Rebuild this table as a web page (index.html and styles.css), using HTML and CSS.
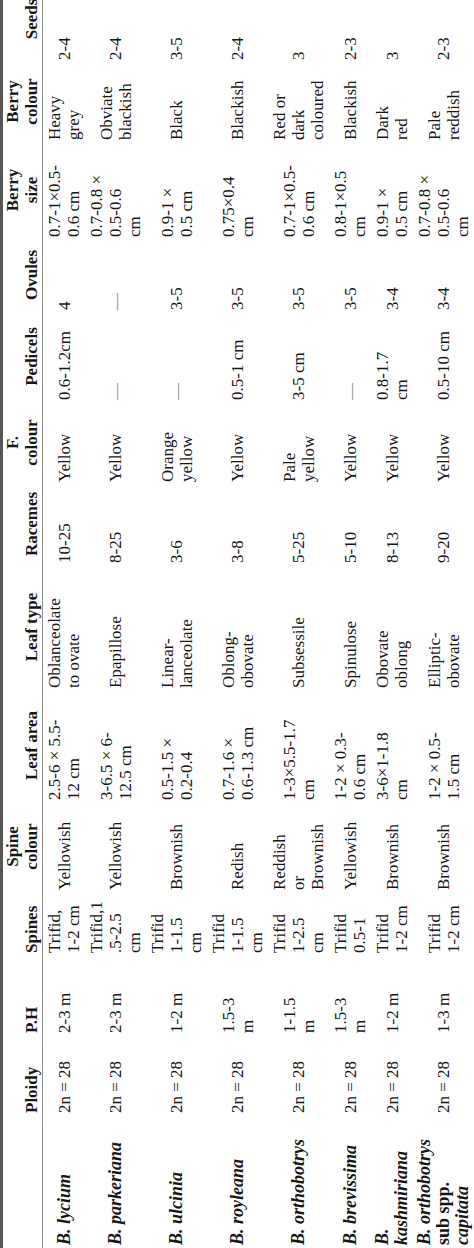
FILE: index.html
```html
<!DOCTYPE html>
<html lang="en">
<head>
<meta charset="utf-8">
<title>Berberis species traits</title>
<link rel="stylesheet" href="styles.css">
</head>
<body>
<div class="page">
<table class="traits">
<colgroup>
<col class="c-sp"><col class="c-pl"><col class="c-ph"><col class="c-spn"><col class="c-spc"><col class="c-la"><col class="c-lt"><col class="c-rc"><col class="c-fc"><col class="c-pd"><col class="c-ov"><col class="c-bs"><col class="c-bc"><col class="c-sd">
</colgroup>
<thead>
<tr>
<th class="l"></th>
<th class="l">Ploidy</th>
<th class="l">P.H</th>
<th class="l">Spines</th>
<th>Spine<br>colour</th>
<th>Leaf area</th>
<th>Leaf type</th>
<th>Racemes</th>
<th>F.<br>colour</th>
<th>Pedicels</th>
<th>Ovules</th>
<th>Berry<br>size</th>
<th>Berry<br>colour</th>
<th>Seeds</th>
</tr>
</thead>
<tbody>
<tr>
<td class="sp">B. lycium</td>
<td>2n = 28</td>
<td>2-3 m</td>
<td>Trifid,<br>1-2 cm</td>
<td>Yellowish</td>
<td>2.5-6 × 5.5-<br>12 cm</td>
<td>Oblanceolate<br>to ovate</td>
<td>10-25</td>
<td>Yellow</td>
<td>0.6-1.2cm</td>
<td>4</td>
<td>0.7-1×0.5-<br>0.6 cm</td>
<td>Heavy<br>grey</td>
<td>2-4</td>
</tr>
<tr>
<td class="sp">B. parkeriana</td>
<td>2n = 28</td>
<td>2-3 m</td>
<td>Trifid,1<br>.5-2.5<br>cm</td>
<td>Yellowish</td>
<td>3-6.5 × 6-<br>12.5 cm</td>
<td>Epapillose</td>
<td>8-25</td>
<td>Yellow</td>
<td><span class="dash">—</span></td>
<td><span class="dash">—</span></td>
<td>0.7-0.8 ×<br>0.5-0.6<br>cm</td>
<td>Obviate<br>blackish</td>
<td>2-4</td>
</tr>
<tr>
<td class="sp">B. ulcinia</td>
<td>2n = 28</td>
<td>1-2 m</td>
<td>Trifid<br>1-1.5<br>cm</td>
<td>Brownish</td>
<td>0.5-1.5 ×<br>0.2-0.4</td>
<td>Linear-<br>lanceolate</td>
<td>3-6</td>
<td>Orange<br>yellow</td>
<td><span class="dash">—</span></td>
<td>3-5</td>
<td>0.9-1 ×<br>0.5 cm</td>
<td>Black</td>
<td>3-5</td>
</tr>
<tr>
<td class="sp">B. royleana</td>
<td>2n = 28</td>
<td>1.5-3<br>m</td>
<td>Trifid<br>1-1.5<br>cm</td>
<td>Redish</td>
<td>0.7-1.6 ×<br>0.6-1.3 cm</td>
<td>Oblong-<br>obovate</td>
<td>3-8</td>
<td>Yellow</td>
<td>0.5-1 cm</td>
<td>3-5</td>
<td>0.75×0.4<br>cm</td>
<td>Blackish</td>
<td>2-4</td>
</tr>
<tr>
<td class="sp">B. orthobotrys</td>
<td>2n = 28</td>
<td>1-1.5<br>m</td>
<td>Trifid<br>1-2.5<br>cm</td>
<td>Reddish<br>or<br>Brownish</td>
<td>1-3×5.5-1.7<br>cm</td>
<td>Subsessile</td>
<td>5-25</td>
<td>Pale<br>yellow</td>
<td>3-5 cm</td>
<td>3-5</td>
<td>0.7-1×0.5-<br>0.6 cm</td>
<td>Red or<br>dark<br>coloured</td>
<td>3</td>
</tr>
<tr>
<td class="sp">B. brevissima</td>
<td>2n = 28</td>
<td>1.5-3<br>m</td>
<td>Trifid<br>0.5-1</td>
<td>Yellowish</td>
<td>1-2 × 0.3-<br>0.6 cm</td>
<td>Spinulose</td>
<td>5-10</td>
<td>Yellow</td>
<td><span class="dash">—</span></td>
<td>3-5</td>
<td>0.8-1×0.5<br>cm</td>
<td>Blackish</td>
<td>2-3</td>
</tr>
<tr>
<td class="sp">B.<br>kashmiriana</td>
<td>2n = 28</td>
<td>1-2 m</td>
<td>Trifid<br>1-2 cm</td>
<td>Brownish</td>
<td>3-6×1-1.8<br>cm</td>
<td>Obovate<br>oblong</td>
<td>8-13</td>
<td>Yellow</td>
<td>0.8-1.7<br>cm</td>
<td>3-4</td>
<td>0.9-1 ×<br>0.5 cm</td>
<td>Dark<br>red</td>
<td>3</td>
</tr>
<tr>
<td class="sp">B. orthobotrys<br><span class="up">sub spp.</span><br>capitata</td>
<td>2n = 28</td>
<td>1-3 m</td>
<td>Trifid<br>1-2 cm</td>
<td>Brownish</td>
<td>1-2 × 0.5-<br>1.5 cm</td>
<td>Elliptic-<br>obovate</td>
<td>9-20</td>
<td>Yellow</td>
<td>0.5-10 cm</td>
<td>3-4</td>
<td>0.7-0.8 ×<br>0.5-0.6<br>cm</td>
<td>Pale<br>reddish</td>
<td>2-3</td>
</tr>
</tbody>
</table>
</div>
</body>
</html>
```
FILE: styles.css
```css
html, body {
  margin: 0;
  padding: 0;
  overflow: hidden;
  background: #ffffff;
}

body {
  width: 474px;
  height: 1248px;
}

/* The table is printed sideways: rotate the whole sheet 90deg counter-clockwise */
.page {
  width: 1270px;
  height: 474px;
  transform-origin: 0 0;
  transform: translateY(1248px) rotate(-90deg);
}

.traits {
  border-collapse: separate;
  border-spacing: 0;
  table-layout: fixed;
  width: 1270px;
  font-family: "Liberation Serif", "Times New Roman", serif;
  font-size: 17px;
  line-height: 19px;
  color: #161616;
}

.c-sp { width: 132px; }
.c-pl { width: 80px; }
.c-ph { width: 80px; }
.c-spn { width: 63px; }
.c-spc { width: 90px; }
.c-la { width: 112px; }
.c-lt { width: 125px; }
.c-rc { width: 81px; }
.c-fc { width: 82px; }
.c-pd { width: 90px; }
.c-ov { width: 73px; }
.c-bs { width: 97px; }
.c-bc { width: 80px; }
.c-sd { width: 85px; }

.traits th {
  border-top: 3px solid #555555;
  border-bottom: 1px solid #8e8e8e;
  padding: 0 0 1px 3px;
  vertical-align: bottom;
  text-align: center;
  font-weight: bold;
  white-space: nowrap;
}

.traits th.l {
  text-align: left;
}

.traits td {
  padding: 2px 0 2px 3px;
  vertical-align: middle;
  text-align: left;
  white-space: nowrap;
}

.traits td.sp {
  font-weight: bold;
  font-style: italic;
  font-size: 18px;
}

.traits td.sp .up {
  font-style: normal;
}

.dash {
  color: #8a8a8a;
}
```
